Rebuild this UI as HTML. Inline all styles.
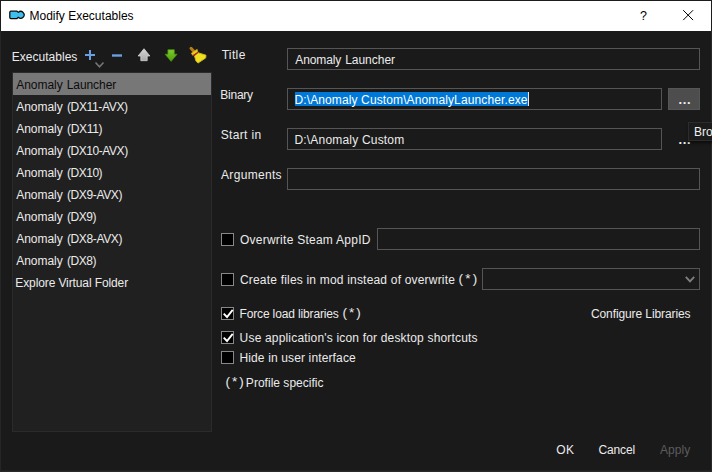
<!DOCTYPE html>
<html><head><meta charset="utf-8">
<style>
html,body{margin:0;padding:0;}
body{width:712px;height:472px;position:relative;overflow:hidden;background:#292929;font-family:"Liberation Sans",sans-serif;font-size:12px;color:#f0f0f0;}
#win{position:absolute;left:1px;top:1px;width:710px;height:469px;background:#1a1a1a;}
.edge{position:absolute;background:#1c1c1c;}
#tb{position:absolute;left:1px;top:1px;width:710px;height:30px;background:#fff;}
.t{position:absolute;white-space:nowrap;line-height:14px;height:14px;}
.in{position:absolute;box-sizing:border-box;border:1px solid #555;background:#1a1a1a;height:22px;}
.cb{position:absolute;box-sizing:border-box;width:13px;height:13px;border:1px solid #888;background:#000;}
#list{position:absolute;left:12px;top:72px;width:200px;height:360px;box-sizing:border-box;border:1px solid #2b2b2b;background:#202020;}
#sel{position:absolute;left:13px;top:73px;width:198px;height:22px;background:#777;}
svg{position:absolute;overflow:visible;}
</style></head><body>
<div id="win"></div>
<div class="edge" style="left:0;top:0;width:712px;height:1px"></div><div class="edge" style="left:0;top:0;width:1px;height:31px"></div><div class="edge" style="left:711px;top:0;width:1px;height:31px"></div><div class="edge" style="left:0;top:31px;width:1px;height:441px;background:#262626"></div><div class="edge" style="left:1px;top:470px;width:710px;height:1px;background:#212121"></div>
<div id="tb"></div>
<svg style="left:0;top:0" width="40" height="30" viewBox="0 0 40 30"><path d="M10.8 11.2 H17 L18.3 12.4 A3.4 3.4 0 1 1 18.3 17.3 L17 18.5 H10.8 A1 1 0 0 1 9.8 17.5 V12.2 A1 1 0 0 1 10.8 11.2 Z" fill="#3dc0f0" stroke="#0a0a0a" stroke-width="1.25" stroke-linejoin="round"/></svg>
<div class="t" style="left:640px;top:8.5px;font-size:12.5px;color:#000">?</div>
<svg style="left:683px;top:10px" width="11" height="11" viewBox="0 0 11 11"><path d="M0.2 0.2 L10.1 10.1 M10.1 0.2 L0.2 10.1" stroke="#000" stroke-width="1" fill="none"/></svg>

<!-- toolbar icons -->
<svg style="left:85px;top:50px" width="10" height="10" viewBox="0 0 10 10"><path d="M5 0 V10 M0 5 H10" stroke="#6a9fe0" stroke-width="2" fill="none"/></svg>
<svg style="left:95px;top:61.6px" width="9" height="6" viewBox="0 0 9 6"><path d="M0.5 0.5 L4.5 4.8 L8.5 0.5" stroke="#757575" stroke-width="1.6" fill="none"/></svg>
<svg style="left:112px;top:53.5px" width="10" height="3" viewBox="0 0 10 3"><rect x="0" y="0.3" width="10" height="2.4" fill="#6a9fe0"/></svg>
<svg style="left:137px;top:48px" width="14" height="14" viewBox="0 0 14 14"><defs><linearGradient id="gu" x1="0" y1="0" x2="0" y2="1"><stop offset="0" stop-color="#d6d6d6"/><stop offset="1" stop-color="#a8a8a8"/></linearGradient></defs><path d="M7 0.7 L12.9 8 H10.2 V12.7 H3.8 V8 H1.1 Z" fill="url(#gu)" stroke="#dedede" stroke-width="0.7" stroke-linejoin="round"/></svg>
<svg style="left:164px;top:49px" width="14" height="14" viewBox="0 0 14 14"><defs><linearGradient id="gd" x1="0" y1="0" x2="0" y2="1"><stop offset="0" stop-color="#7fd030"/><stop offset="1" stop-color="#4c9a0c"/></linearGradient></defs><path d="M3.9 0.7 H10.3 V5.2 H13.1 L7.1 12.4 L1.1 5.2 H3.9 Z" fill="url(#gd)" stroke="#4a920c" stroke-width="0.7" stroke-linejoin="round"/></svg>
<svg style="left:184px;top:42px" width="26" height="24" viewBox="0 0 26 24"><path d="M7 6.3 L10 9.6" stroke="#bf7a12" stroke-width="3" stroke-linecap="round"/><path d="M7.2 11.2 L13.2 7.2 L13.8 10 L8.8 13.6 Z" fill="#e4cf20" stroke="#c9b417" stroke-width="0.5" stroke-linejoin="round"/><path d="M10.5 13.9 L14.3 10.8 L22 13.2 L21.7 16 L14 21.1 L11.8 18.7 Z" fill="#efe01f" stroke="#cdb820" stroke-width="0.9" stroke-linejoin="round"/><path d="M9.2 13.6 L13.9 10.4" stroke="#c81e1e" stroke-width="1.2"/></svg>

<div id="list"></div>
<div id="sel"></div>

<div class="in" style="left:287px;top:48px;width:413px"></div>
<div class="in" style="left:287px;top:88px;width:375px"></div>
<div style="position:absolute;left:295px;top:92px;width:233px;height:14px;background:#0078d7"></div>
<div style="position:absolute;left:528px;top:92px;width:1px;height:14px;background:#e8e8e8"></div>
<div style="position:absolute;left:668px;top:88px;width:32px;height:22px;box-sizing:border-box;border:1px solid #565656;background:#4d4d4d"></div>
<div class="t" id="d1" style="left:678.6px;top:93px;font-size:13px;font-weight:bold;letter-spacing:0.6px">...</div>
<div class="in" style="left:287px;top:128px;width:375px"></div>
<div class="t" id="d2" style="left:678.6px;top:133px;font-size:13px;font-weight:bold;letter-spacing:0.6px">...</div>
<div style="position:absolute;left:688px;top:122px;width:30px;height:19px;box-sizing:border-box;border:1px solid #2c2c2c;background:#1c1c1c;box-shadow:1px 2px 3px rgba(0,0,0,.6)"></div>
<div class="t" style="left:694px;top:125px">Bro</div>
<div class="in" style="left:287px;top:168px;width:413px"></div>

<div class="cb" style="left:221px;top:233px"></div>
<div class="in" style="left:377px;top:228px;width:323px"></div>
<div class="cb" style="left:221px;top:273px"></div>
<div class="in" style="left:482px;top:268px;width:218px"></div>
<svg style="left:685px;top:276px" width="10" height="7" viewBox="0 0 10 7"><path d="M0.8 0.8 L5 5.4 L9.2 0.8" stroke="#808080" stroke-width="1.8" fill="none"/></svg>
<div class="cb" style="left:221px;top:307px"></div>
<svg style="left:221px;top:307px" width="13" height="13" viewBox="0 0 13 13"><path d="M2.7 6.7 L6 10 L11.7 2.8" stroke="#fff" stroke-width="1.9" fill="none"/></svg>
<div class="cb" style="left:221px;top:331px"></div>
<svg style="left:221px;top:331px" width="13" height="13" viewBox="0 0 13 13"><path d="M2.7 6.7 L6 10 L11.7 2.8" stroke="#fff" stroke-width="1.9" fill="none"/></svg>
<div class="cb" style="left:221px;top:351px"></div>

<div class="t" id="title_0" style="left:29.46px;top:9.00px;letter-spacing:0.006px;color:#000;">Modify Executables</div>
<div class="t" id="exec_0" style="left:11.83px;top:50.00px;letter-spacing:0.013px;color:#ebebeb;">Executables</div>
<div class="t" id="l0_0" style="left:16.29px;top:78.00px;letter-spacing:-0.046px;color:#0c0c0c;">Anomaly</div>
<div class="t" id="l0_1" style="left:66.73px;top:78.00px;letter-spacing:-0.074px;color:#0c0c0c;">Launcher</div>
<div class="t" id="l1_0" style="left:16.29px;top:100.00px;letter-spacing:-0.046px;color:#ebebeb;">Anomaly</div>
<div class="t" id="l1_1" style="left:66.95px;top:100.00px;letter-spacing:-0.347px;color:#ebebeb;">(DX11-AVX)</div>
<div class="t" id="l2_0" style="left:16.29px;top:122.00px;letter-spacing:-0.046px;color:#ebebeb;">Anomaly</div>
<div class="t" id="l2_1" style="left:66.95px;top:122.00px;letter-spacing:-0.301px;color:#ebebeb;">(DX11)</div>
<div class="t" id="l3_0" style="left:16.29px;top:144.00px;letter-spacing:-0.046px;color:#ebebeb;">Anomaly</div>
<div class="t" id="l3_1" style="left:66.95px;top:144.00px;letter-spacing:-0.434px;color:#ebebeb;">(DX10-AVX)</div>
<div class="t" id="l4_0" style="left:16.29px;top:166.00px;letter-spacing:-0.046px;color:#ebebeb;">Anomaly</div>
<div class="t" id="l4_1" style="left:66.95px;top:166.00px;letter-spacing:-0.471px;color:#ebebeb;">(DX10)</div>
<div class="t" id="l5_0" style="left:16.29px;top:188.00px;letter-spacing:-0.046px;color:#ebebeb;">Anomaly</div>
<div class="t" id="l5_1" style="left:66.95px;top:188.00px;letter-spacing:-0.373px;color:#ebebeb;">(DX9-AVX)</div>
<div class="t" id="l6_0" style="left:16.29px;top:210.00px;letter-spacing:-0.046px;color:#ebebeb;">Anomaly</div>
<div class="t" id="l6_1" style="left:66.95px;top:210.00px;letter-spacing:-0.458px;color:#ebebeb;">(DX9)</div>
<div class="t" id="l7_0" style="left:16.29px;top:232.00px;letter-spacing:-0.046px;color:#ebebeb;">Anomaly</div>
<div class="t" id="l7_1" style="left:66.95px;top:232.00px;letter-spacing:-0.373px;color:#ebebeb;">(DX8-AVX)</div>
<div class="t" id="l8_0" style="left:16.29px;top:254.00px;letter-spacing:-0.046px;color:#ebebeb;">Anomaly</div>
<div class="t" id="l8_1" style="left:66.95px;top:254.00px;letter-spacing:-0.458px;color:#ebebeb;">(DX8)</div>
<div class="t" id="l9_0" style="left:15.30px;top:276.00px;letter-spacing:-0.111px;color:#ebebeb;">Explore Virtual Folder</div>
<div class="t" id="lt_0" style="left:221.64px;top:48.00px;letter-spacing:0.365px;color:#ebebeb;">Title</div>
<div class="t" id="lb_0" style="left:220.25px;top:88.00px;letter-spacing:-0.231px;color:#ebebeb;">Binary</div>
<div class="t" id="ls_0" style="left:220.65px;top:128.00px;letter-spacing:0.360px;color:#ebebeb;">Start in</div>
<div class="t" id="la_0" style="left:221.04px;top:168.00px;letter-spacing:0.314px;color:#ebebeb;">Arguments</div>
<div class="t" id="it_0" style="left:295.36px;top:53.00px;letter-spacing:-0.131px;color:#ebebeb;">Anomaly</div>
<div class="t" id="it_1" style="left:345.15px;top:53.00px;letter-spacing:-0.015px;color:#ebebeb;">Launcher</div>
<div class="t" id="ib_0" style="left:294.46px;top:93.00px;letter-spacing:0.118px;color:#fff;">D:\Anomaly Custom\AnomalyLauncher.exe</div>
<div class="t" id="is_0" style="left:294.46px;top:133.00px;letter-spacing:0.192px;color:#ebebeb;">D:\Anomaly Custom</div>
<div class="t" id="c1_0" style="left:239.91px;top:233.00px;letter-spacing:0.257px;color:#ebebeb;">Overwrite Steam AppID</div>
<div class="t" id="c2_0" style="left:239.93px;top:273.00px;letter-spacing:0.194px;color:#ebebeb;">Create files in mod instead of overwrite</div>
<div class="t" id="c2_1" style="left:458.52px;top:272.00px;letter-spacing:2.243px;color:#ebebeb;font-size:13.5px">(*)</div>
<div class="t" id="c3_0" style="left:239.46px;top:307.00px;letter-spacing:-0.140px;color:#ebebeb;">Force load libraries</div>
<div class="t" id="c3_1" style="left:342.52px;top:306.00px;letter-spacing:1.947px;color:#ebebeb;font-size:13.5px">(*)</div>
<div class="t" id="c4_0" style="left:239.62px;top:331.00px;letter-spacing:0.175px;color:#ebebeb;">Use application's icon for desktop shortcuts</div>
<div class="t" id="c5_0" style="left:239.46px;top:351.00px;letter-spacing:0.136px;color:#ebebeb;">Hide in user interface</div>
<div class="t" id="pf_0" style="left:225.39px;top:375.00px;letter-spacing:2.084px;color:#ebebeb;font-size:13.5px">(*)</div>
<div class="t" id="pf_1" style="left:245.87px;top:376.00px;letter-spacing:0.020px;color:#ebebeb;">Profile specific</div>
<div class="t" id="cf_0" style="left:590.93px;top:307.00px;letter-spacing:-0.098px;color:#ebebeb;">Configure Libraries</div>
<div class="t" id="ok_0" style="left:556.36px;top:443.00px;letter-spacing:0.208px;color:#ebebeb;">OK</div>
<div class="t" id="cn_0" style="left:598.47px;top:443.00px;letter-spacing:-0.135px;color:#ebebeb;">Cancel</div>
<div class="t" id="ap_0" style="left:660.04px;top:443.00px;letter-spacing:0.028px;color:#5c5c5c;">Apply</div>
</body></html>
